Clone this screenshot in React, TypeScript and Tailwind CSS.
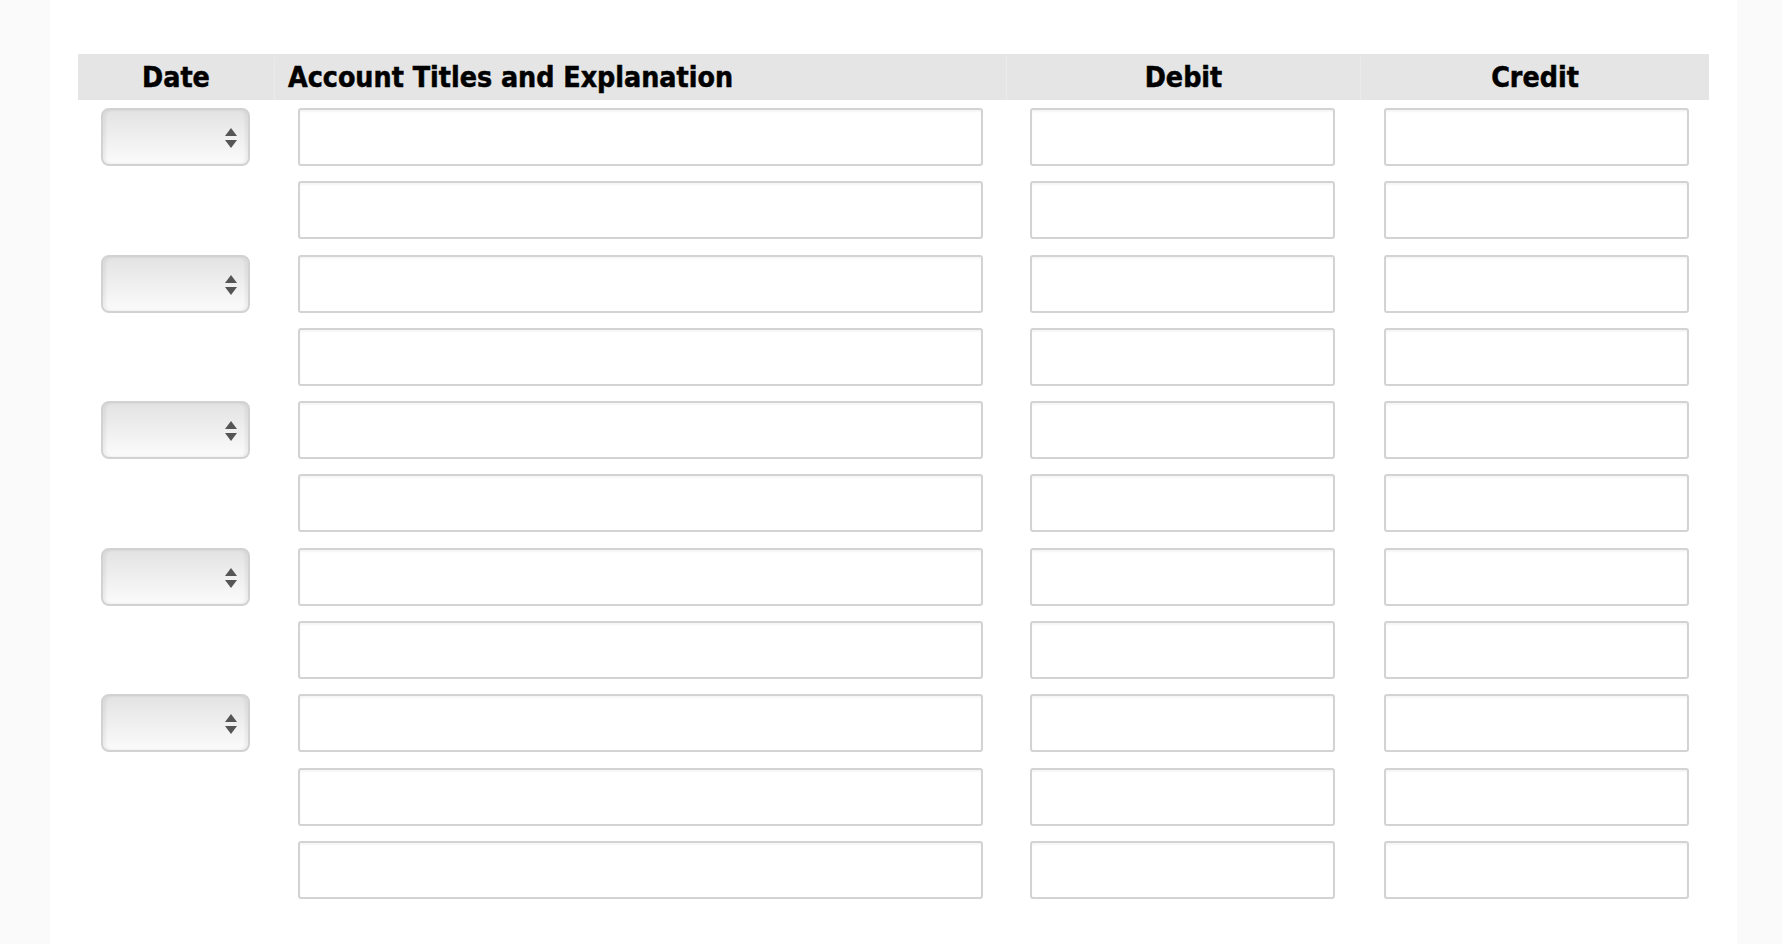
import React from 'react';

const rows = [true, false, true, false, true, false, true, false, true, false, false];

const headFont = {
  fontFamily: '"DejaVu Sans Condensed", "DejaVu Sans", Verdana, sans-serif',
  WebkitTextStroke: '0.5px #000',
};

function DateSelect() {
  return (
    <div className="relative w-[149px] h-[58px] rounded-[8px] border-2 border-[#d2d2d2] bg-gradient-to-b from-[#e3e3e3] to-[#fbfbfb] shadow-[inset_3px_0_3px_rgba(0,0,0,0.05),inset_-3px_0_3px_rgba(0,0,0,0.05)]">
      <svg className="absolute right-[11px] top-[18px]" width="12" height="20" viewBox="0 0 12 20">
        <polygon points="6,0 12,8 0,8" fill="#555" />
        <polygon points="0,12 12,12 6,20" fill="#555" />
      </svg>
    </div>
  );
}

function TextBox({ width }: { width: string }) {
  return (
    <div
      className={`${width} h-[58px] rounded-[3px] border-2 border-[#d3d3d3] bg-white shadow-[inset_0_2px_2px_rgba(0,0,0,0.04)]`}
    />
  );
}

export default function App() {
  return (
    <div className="w-full h-[944px] bg-[#fafafa] overflow-hidden">
      <div className="ml-[50px] w-[1687px] h-full bg-white pl-[28px] pt-[54px]">
        {/* Header */}
        <div className="flex w-[1631px] h-[46px] bg-[#e5e5e5] text-black font-bold text-[28.3px] pt-[3px]" style={headFont}>
          <div className="w-[197px] flex items-center justify-center border-r border-[#ebebeb]">Date</div>
          <div className="w-[732px] flex items-center pl-[13px] border-r border-[#ebebeb]">Account Titles and Explanation</div>
          <div className="w-[354px] flex items-center justify-center border-r border-[#ebebeb]">Debit</div>
          <div className="w-[348px] flex items-center justify-center">Credit</div>
        </div>

        {/* Rows */}
        <div className="pt-[8px]">
          {rows.map((hasDate, i) => (
            <div key={i} className="flex h-[73.3px]">
              <div className="w-[197px] pl-[23px]">{hasDate && <DateSelect />}</div>
              <div className="w-[732px] pl-[23px]">
                <TextBox width="w-[685px]" />
              </div>
              <div className="w-[354px] pl-[23px]">
                <TextBox width="w-[305px]" />
              </div>
              <div className="w-[348px] pl-[23px]">
                <TextBox width="w-[305px]" />
              </div>
            </div>
          ))}
        </div>
      </div>
    </div>
  );
}
